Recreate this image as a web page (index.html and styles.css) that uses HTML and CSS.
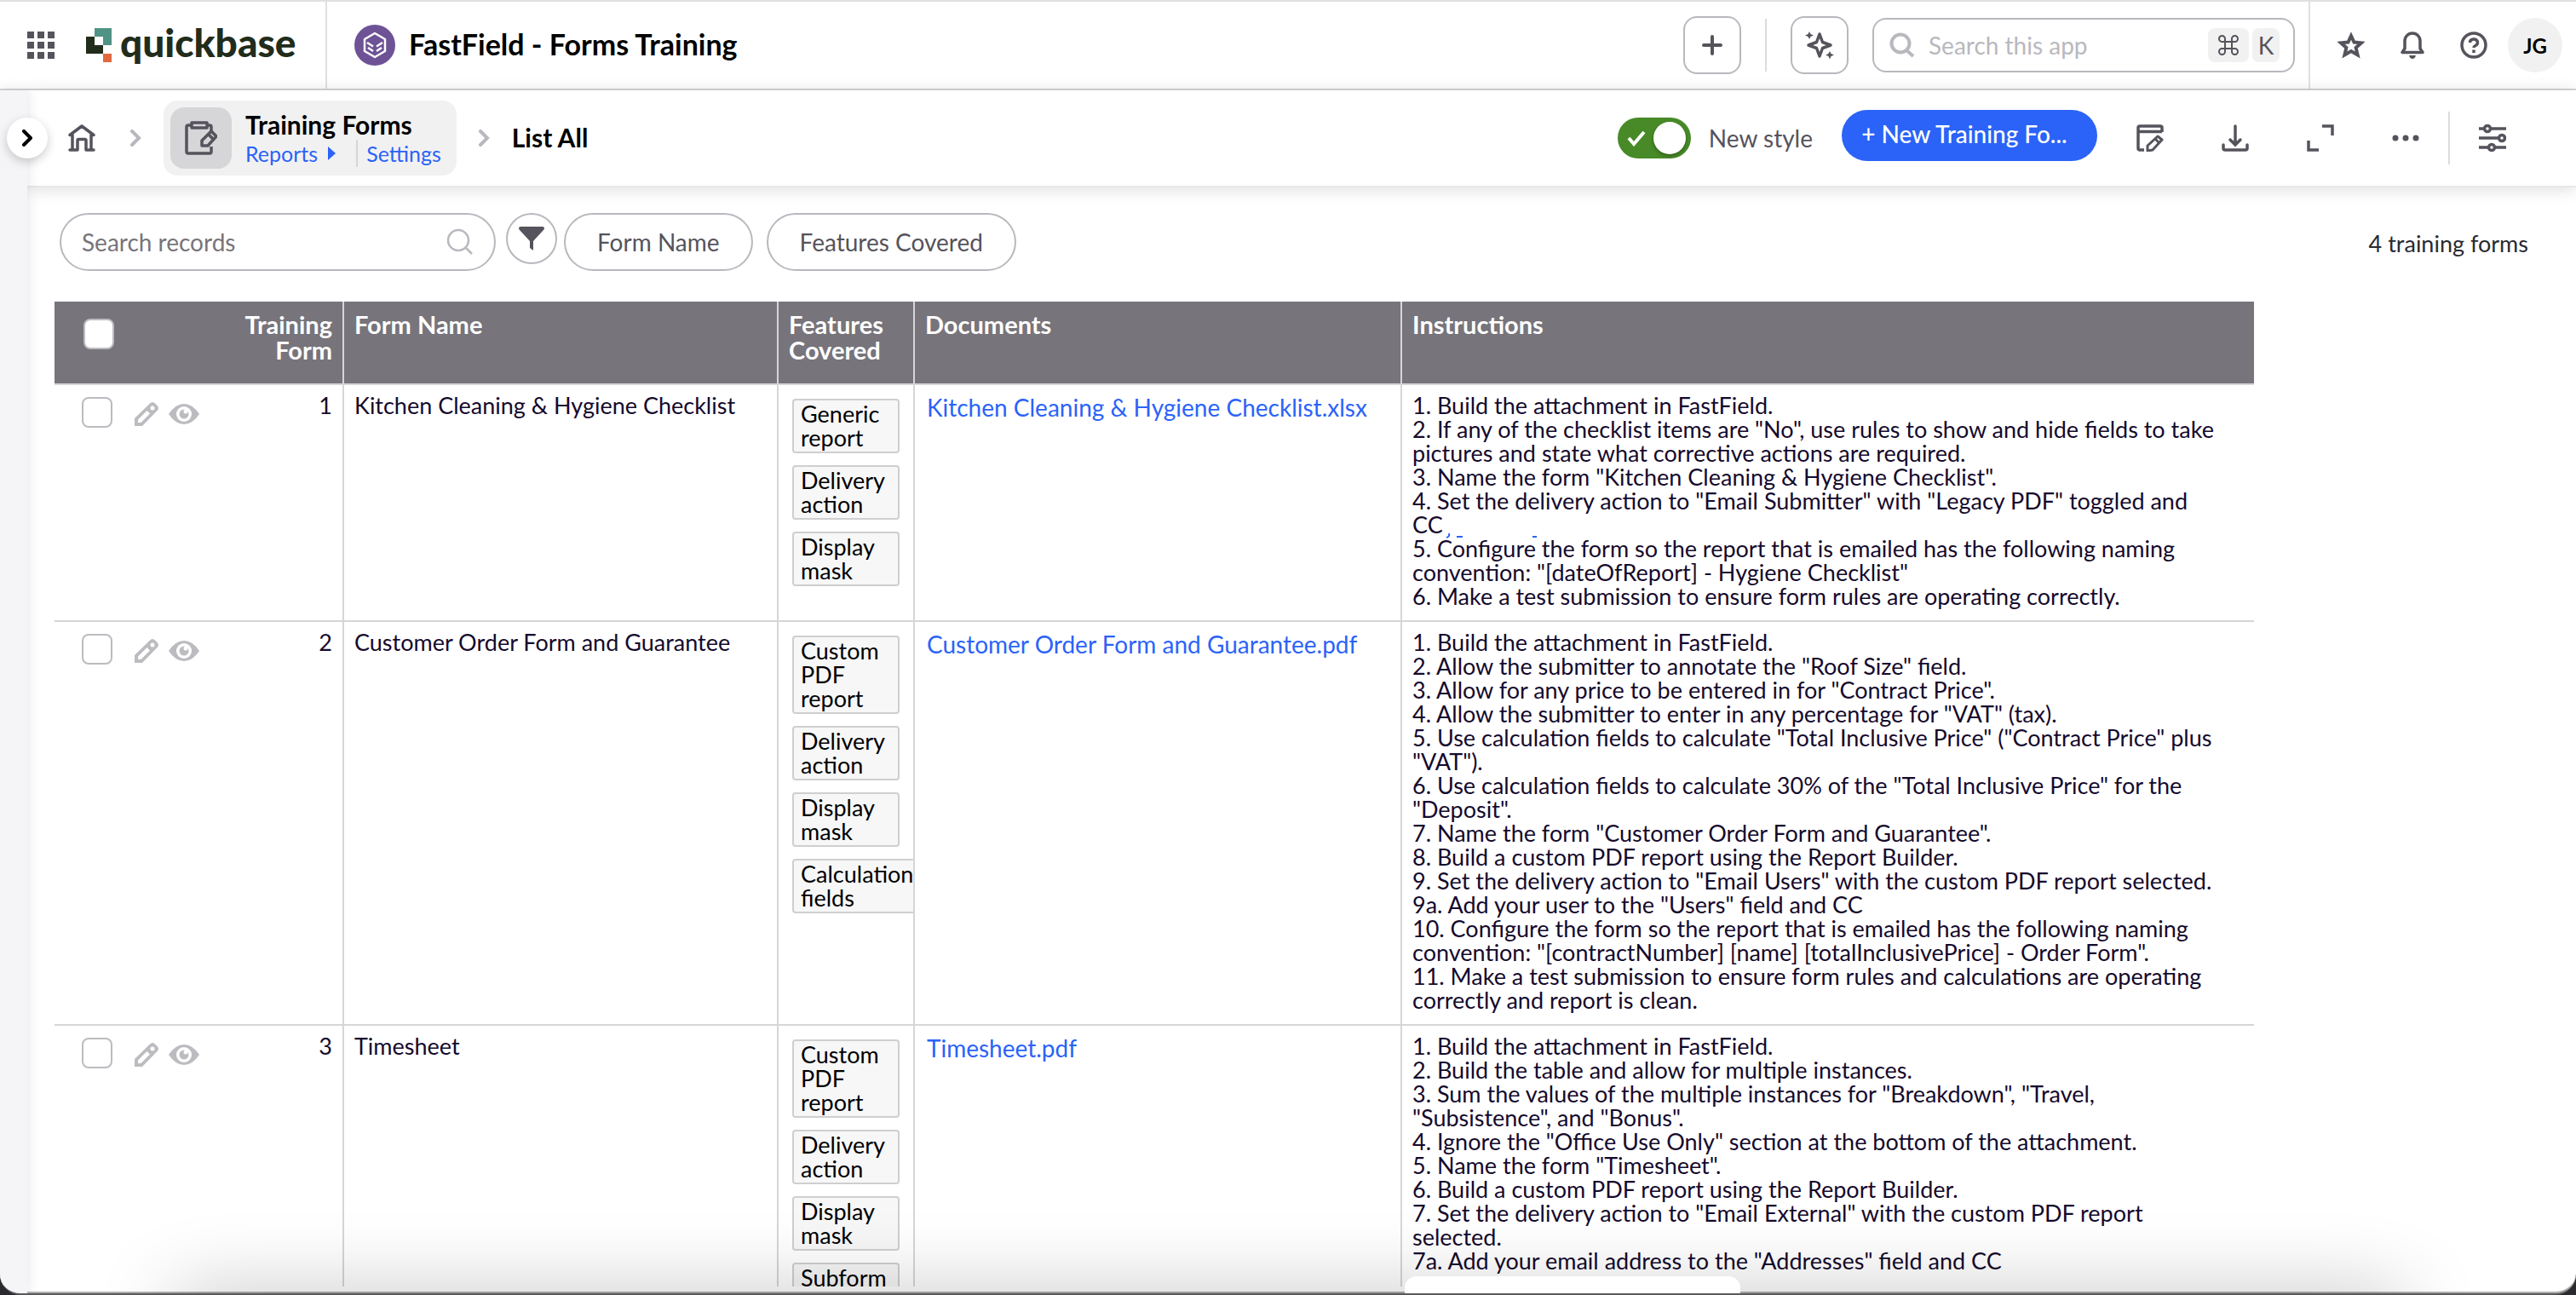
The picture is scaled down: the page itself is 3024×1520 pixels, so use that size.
FILE: index.html
```html
<!DOCTYPE html>
<html lang="en">
<head>
    <meta charset="UTF-8">
    <meta name="viewport" content="width=device-width, initial-scale=1.0">
    <title>FastField - Forms Training</title>
    <link rel="stylesheet" href="styles.css">
</head>
<body>
    <svg class="sprite" aria-hidden="true">
        <symbol id="pencil" viewBox="0 0 28 28">
            <path d="M0 28v-9L18 1.500q3-3 6 0l2.500 2.500q3 3 0 6L9 28z" fill="currentColor"/>
            <path d="M4 20.500L14.500 10l3.500 3.500L7.500 24H4z" fill="#fff"/>
            <circle cx="21" cy="7" r="2.500" fill="#fff"/>
        </symbol>
        <symbol id="eye" viewBox="0 0 36 24">
            <path d="M0 12Q8 0 18 0t18 12Q28 24 18 24T0 12z" fill="currentColor"/>
            <circle cx="18" cy="12" r="9" fill="#fff"/>
            <circle cx="18" cy="12" r="5.500" fill="currentColor"/>
            <circle cx="20" cy="9" r="2.500" fill="#fff"/>
        </symbol>
    </svg>

    <div class="window">
        <!-- Global header -->
        <header class="topbar">
            <div class="brand">
                <button class="icon-btn" aria-label="Apps">
                    <svg width="32" height="32" viewBox="0 0 32 32" fill="#56535c">
                        <path d="M0 0h8v8H0zM12 0h8v8h-8zM24 0h8v8h-8zM0 12h8v8H0zM12 12h8v8h-8zM24 12h8v8h-8zM0 24h8v8H0zM12 24h8v8h-8zM24 24h8v8h-8z"/>
                    </svg>
                </button>
                <a class="logo" href="#">
                    <svg width="30" height="40" viewBox="0 0 30 40">
                        <path d="M10 0h20v20h-10v-10h-10z" fill="#4f9384"/>
                        <path d="M0 10h10v10h10v10H0z" fill="#212c1b"/>
                        <path d="M20 30h10v10H20z" fill="#e1683f"/>
                    </svg>
                    <span>quickbase</span>
                </a>
            </div>
            <div class="app">
                <svg width="48" height="48" viewBox="0 0 48 48">
                    <circle cx="24" cy="24" r="24" fill="#6e5296"/>
                    <path d="M24 10l12 7v14l-12 7-12-7V17z" fill="none" stroke="#fff" stroke-width="2.500" stroke-linejoin="round"/>
                    <path d="M15 21l7 4.500M33 21l-7 4.500M16 27l6 4M32 27l-6 4" stroke="#fff" stroke-width="2.500" fill="none"/>
                </svg>
                <h1>FastField - Forms Training</h1>
            </div>
            <div class="top-tools">
                <button class="box-btn" aria-label="Add">
                    <svg width="24" height="24" viewBox="0 0 24 24"><path d="M12 2v20M2 12h20" stroke="#56535c" stroke-width="4" stroke-linecap="round"/></svg>
                </button>
                <span class="divider"></span>
                <button class="box-btn" aria-label="Assistant">
                    <svg width="34" height="34" viewBox="0 0 34 34" fill="#56535c">
                        <path d="M17 4l3.500 9.500L30 17l-9.500 3.500L17 30l-3.500-9.500L4 17l9.500-3.500z" fill="none" stroke="#56535c" stroke-width="3.500" stroke-linejoin="round"/>
                        <path d="M5 1l1.500 3L10 5.500 6.500 7 5 10 3.500 7 0 5.500 3.500 4zM29 24l1.500 3 3.500 1.500L30.500 30 29 33.500 27.500 30 24 28.500 27.500 27z"/>
                    </svg>
                </button>
                <div class="app-search">
                    <svg width="30" height="30" viewBox="0 0 30 30" fill="none" stroke="#b9b8be" stroke-width="4"><circle cx="13" cy="13" r="10.500"/><path d="M20 21l8 7"/></svg>
                    <input type="text" placeholder="Search this app" aria-label="Search this app">
                    <kbd class="cmd">
                        <svg width="24" height="24" viewBox="0 0 24 24" fill="none" stroke="#56535c" stroke-width="2"><path d="M8 8h8v8H8zM8 8H5a3.500 3.500 0 1 1 3-3.500zM16 8V4.500A3.500 3.500 0 1 1 19.500 8zM16 16h3.500a3.500 3.500 0 1 1-3.500 3.500zM8 16v3.500A3.500 3.500 0 1 1 4.500 16z"/></svg>
                    </kbd>
                    <kbd>K</kbd>
                </div>
            </div>
            <div class="user-tools">
                <button class="icon-btn" aria-label="Favorites">
                    <svg width="32" height="32" viewBox="0 0 32 32"><path d="M16 5l3.500 7.500 8.500.8-6.400 5.700 2 8.500L16 23l-7.600 4.500 2-8.500L4 13.300l8.500-.8z" fill="none" stroke="#56535c" stroke-width="4"/></svg>
                </button>
                <button class="icon-btn" aria-label="Notifications">
                    <svg width="32" height="32" viewBox="0 0 32 32" fill="none" stroke="#56535c" stroke-width="3.500"><path d="M4 24.500h24L25 20v-9a9 9 0 0 0-18 0v9z" stroke-linejoin="round"/><path d="M12 28h8q-1 4-4 4t-4-4z" fill="#56535c" stroke="none"/></svg>
                </button>
                <button class="icon-btn" aria-label="Help">
                    <svg width="32" height="32" viewBox="0 0 32 32" fill="none" stroke="#56535c" stroke-width="3.500"><circle cx="16" cy="16" r="14"/><path d="M11.500 13a4.500 4 0 1 1 6.500 3.500q-2 1-2 2.500M16 21.500v3.500"/></svg>
                </button>
                <button class="avatar">JG</button>
            </div>
        </header>

        <div class="body">
            <aside class="rail">
                <button class="expand" aria-label="Expand navigation">
                    <svg width="14" height="20" viewBox="0 0 14 20"><path d="M3 2l8 8-8 8" fill="none" stroke="#000" stroke-width="4" stroke-linecap="round" stroke-linejoin="round"/></svg>
                </button>
            </aside>

            <main class="main">
                <!-- Breadcrumb and page actions -->
                <div class="pagebar">
                    <nav class="crumbs">
                        <a class="home" href="#" aria-label="Home">
                            <svg width="32" height="32" viewBox="0 0 32 32" fill="none" stroke="#56535c" stroke-width="3.500"><path d="M2 12.500L16 2l14 10.500M5 12v18h6V19q0-1.500 1.500-1.500h7q1.500 0 1.500 1.500v11h6V12M2 30h9M21 30h9" stroke-linejoin="round" stroke-linecap="round"/></svg>
                        </a>
                        <svg class="sep" width="14" height="20" viewBox="0 0 14 20"><path d="M3 2l8 8-8 8" fill="none" stroke="#b9b8be" stroke-width="4" stroke-linecap="round"/></svg>
                        <div class="table-crumb">
                            <span class="table-icon">
                                <svg width="38" height="40" viewBox="0 0 38 40" fill="none" stroke="#56535c" stroke-width="3.500" stroke-linejoin="round">
                                    <path d="M8 5H4q-2 0-2 2v29q0 2 2 2h25q2 0 2-2v-6M31 12V7q0-2-2-2h-3"/>
                                    <path d="M8 2h18v6H8zM20 23l11-11 6 6-10 11h-7z"/><path d="M28 16l5 5"/>
                                </svg>
                            </span>
                            <div class="table-names">
                                <strong>Training Forms</strong>
                                <div class="table-links">
                                    <a href="#">Reports <svg width="9" height="16" viewBox="0 0 9 16"><path d="M0 0l9 8-9 8z" fill="#2b63f8"/></svg></a>
                                    <a class="settings" href="#">Settings</a>
                                </div>
                            </div>
                        </div>
                        <svg class="sep" width="14" height="20" viewBox="0 0 14 20"><path d="M3 2l8 8-8 8" fill="none" stroke="#b9b8be" stroke-width="4" stroke-linecap="round"/></svg>
                        <strong class="current">List All</strong>
                    </nav>
                    <div class="actions">
                        <label class="switch">
                            <input type="checkbox" checked>
                            <span class="track">
                                <svg width="24" height="20" viewBox="0 0 24 20"><path d="M3 10l6 7L21 3" fill="none" stroke="#fff" stroke-width="4"/></svg>
                                <span class="knob"></span>
                            </span>
                            New style
                        </label>
                        <button class="primary">+ New Training Fo...</button>
                        <div class="action-icons">
                            <button class="icon-btn" aria-label="Customize">
                                <svg width="32" height="32" viewBox="0 0 32 32" fill="none" stroke="#56535c" stroke-width="3.500" stroke-linejoin="round"><path d="M9 30H4q-2 0-2-2V4q0-2 2-2h24q2 0 2 2v5M2 8.500h28"/><path d="M13 31v-6l12-11 5 4-11 12z" stroke-width="3"/><path d="M22 17l4 4" stroke-width="3"/></svg>
                            </button>
                            <button class="icon-btn" aria-label="Download">
                                <svg width="32" height="32" viewBox="0 0 32 32" fill="none" stroke="#56535c" stroke-width="3.500" stroke-linecap="round"><path d="M16 2v21M10 18l6 6 6-6M2 24v4q0 2 2 2h24q2 0 2-2v-4"/></svg>
                            </button>
                            <button class="icon-btn" aria-label="Full screen">
                                <svg width="32" height="32" viewBox="0 0 32 32" fill="none" stroke="#56535c" stroke-width="3.500"><path d="M18 2h12v11M2 19v11h12"/></svg>
                            </button>
                            <button class="icon-btn" aria-label="More">
                                <svg width="32" height="32" viewBox="0 0 32 32" fill="#56535c"><circle cx="4" cy="16" r="3.500"/><circle cx="16" cy="16" r="3.500"/><circle cx="28" cy="16" r="3.500"/></svg>
                            </button>
                        </div>
                        <span class="divider"></span>
                        <button class="icon-btn" aria-label="Display options">
                            <svg width="32" height="32" viewBox="0 0 32 32" fill="none" stroke="#56535c" stroke-width="3.500"><path d="M0 5h6M14 5h18M0 16h23M31 16h1M0 27h11M19 27h13"/><circle cx="10" cy="5" r="3.500"/><circle cx="27" cy="16" r="3.500"/><circle cx="15" cy="27" r="3.500"/></svg>
                        </button>
                    </div>
                </div>

                <!-- Filters -->
                <div class="filters">
                    <div class="record-search">
                        <input type="text" placeholder="Search records" aria-label="Search records">
                        <svg width="32" height="32" viewBox="0 0 32 32" fill="none" stroke="#b9b8be" stroke-width="2.500"><circle cx="14" cy="14" r="12"/><path d="M23 23l7 7"/></svg>
                    </div>
                    <button class="funnel" aria-label="Filter">
                        <svg width="30" height="28" viewBox="0 0 30 28"><path d="M0 2q0-2 2-2h26q2 0 2 2 0 1-1 2L17 17v11l-4-3v-8L1 4Q0 3 0 2z" fill="#56535c"/></svg>
                    </button>
                    <button class="pill">Form Name</button>
                    <button class="pill">Features Covered</button>
                    <span class="count">4 training forms</span>
                </div>

                <!-- Records -->
                <div class="records">
                    <table>
                        <colgroup>
                            <col class="col-tools"><col class="col-id"><col class="col-name"><col class="col-features"><col class="col-docs"><col>
                        </colgroup>
                        <thead>
                            <tr>
                                <th class="tools"><input type="checkbox" aria-label="Select all"></th>
                                <th class="id">Training Form</th>
                                <th>Form Name</th>
                                <th>Features Covered</th>
                                <th>Documents</th>
                                <th>Instructions</th>
                            </tr>
                        </thead>
                        <tbody>
                            <tr>
                                <td class="tools">
                                    <div class="row-tools">
                                        <input type="checkbox" aria-label="Select record 1">
                                        <button class="icon-btn" aria-label="Edit"><svg width="28" height="28"><use href="#pencil"/></svg></button>
                                        <button class="icon-btn" aria-label="View"><svg width="36" height="24"><use href="#eye"/></svg></button>
                                    </div>
                                </td>
                                <td class="id">1</td>
                                <td>Kitchen Cleaning &amp; Hygiene Checklist</td>
                                <td class="features">
                                    <span class="tag">Generic report</span>
                                    <span class="tag">Delivery action</span>
                                    <span class="tag">Display mask</span>
                                </td>
                                <td class="docs"><a href="#">Kitchen Cleaning &amp; Hygiene Checklist.xlsx</a></td>
                                <td class="steps">1. Build the attachment in FastField.<br>
                                    2. If any of the checklist items are "No", use rules to show and hide fields to take<br>
                                    pictures and state what corrective actions are required.<br>
                                    3. Name the form "Kitchen Cleaning &amp; Hygiene Checklist".<br>
                                    4. Set the delivery action to "Email Submitter" with "Legacy PDF" toggled and<br>
                                    CC <svg class="mark" width="108" height="6" viewBox="0 0 108 6"><path d="M3 0q1 4-3 5M12 4h7M101 4h5" fill="none" stroke="#2b63f8" stroke-width="2"/></svg><br>
                                    5. Configure the form so the report that is emailed has the following naming<br>
                                    convention: "[dateOfReport] - Hygiene Checklist"<br>
                                    6. Make a test submission to ensure form rules are operating correctly.</td>
                            </tr>
                            <tr>
                                <td class="tools">
                                    <div class="row-tools">
                                        <input type="checkbox" aria-label="Select record 2">
                                        <button class="icon-btn" aria-label="Edit"><svg width="28" height="28"><use href="#pencil"/></svg></button>
                                        <button class="icon-btn" aria-label="View"><svg width="36" height="24"><use href="#eye"/></svg></button>
                                    </div>
                                </td>
                                <td class="id">2</td>
                                <td>Customer Order Form and Guarantee</td>
                                <td class="features">
                                    <span class="tag">Custom PDF report</span>
                                    <span class="tag">Delivery action</span>
                                    <span class="tag">Display mask</span>
                                    <span class="tag">Calculation fields</span>
                                </td>
                                <td class="docs"><a href="#">Customer Order Form and Guarantee.pdf</a></td>
                                <td class="steps">1. Build the attachment in FastField.<br>
                                    2. Allow the submitter to annotate the "Roof Size" field.<br>
                                    3. Allow for any price to be entered in for "Contract Price".<br>
                                    4. Allow the submitter to enter in any percentage for "VAT" (tax).<br>
                                    5. Use calculation fields to calculate "Total Inclusive Price" ("Contract Price" plus<br>
                                    "VAT").<br>
                                    6. Use calculation fields to calculate 30% of the "Total Inclusive Price" for the<br>
                                    "Deposit".<br>
                                    7. Name the form "Customer Order Form and Guarantee".<br>
                                    8. Build a custom PDF report using the Report Builder.<br>
                                    9. Set the delivery action to "Email Users" with the custom PDF report selected.<br>
                                    9a. Add your user to the "Users" field and CC<br>
                                    10. Configure the form so the report that is emailed has the following naming<br>
                                    convention: "[contractNumber] [name] [totalInclusivePrice] - Order Form".<br>
                                    11. Make a test submission to ensure form rules and calculations are operating<br>
                                    correctly and report is clean.</td>
                            </tr>
                            <tr>
                                <td class="tools">
                                    <div class="row-tools">
                                        <input type="checkbox" aria-label="Select record 3">
                                        <button class="icon-btn" aria-label="Edit"><svg width="28" height="28"><use href="#pencil"/></svg></button>
                                        <button class="icon-btn" aria-label="View"><svg width="36" height="24"><use href="#eye"/></svg></button>
                                    </div>
                                </td>
                                <td class="id">3</td>
                                <td>Timesheet</td>
                                <td class="features">
                                    <span class="tag">Custom PDF report</span>
                                    <span class="tag">Delivery action</span>
                                    <span class="tag">Display mask</span>
                                    <span class="tag">Subform</span>
                                </td>
                                <td class="docs"><a href="#">Timesheet.pdf</a></td>
                                <td class="steps">1. Build the attachment in FastField.<br>
                                    2. Build the table and allow for multiple instances.<br>
                                    3. Sum the values of the multiple instances for "Breakdown", "Travel,<br>
                                    "Subsistence", and "Bonus".<br>
                                    4. Ignore the "Office Use Only" section at the bottom of the attachment.<br>
                                    5. Name the form "Timesheet".<br>
                                    6. Build a custom PDF report using the Report Builder.<br>
                                    7. Set the delivery action to "Email External" with the custom PDF report<br>
                                    selected.<br>
                                    7a. Add your email address to the "Addresses" field and CC</td>
                            </tr>
                        </tbody>
                    </table>
                </div>
            </main>
        </div>
        <div class="dock-shadow"></div>
        <div class="dock-label"></div>
    </div>
</body>
</html>
```
FILE: styles.css
```css
* {
    box-sizing: border-box;
}
body {
    margin: 0;
    height: 100vh;
    overflow: hidden;
    background: #2b2a2f;
    color: #000;
    font-family: Lato, "Open Sans", sans-serif;
    font-size: 28px;
}
button {
    font: inherit;
    color: inherit;
    padding: 0;
    border: 0;
    background: none;
}
input[type="text"] {
    font: inherit;
    flex: 1;
    min-width: 0;
    padding: 0;
    border: 0;
    outline: 0;
    background: none;
}
a {
    color: #2b63f8;
    text-decoration: none;
}
svg {
    display: block;
    flex: none;
}
.sprite {
    position: absolute;
    width: 0;
    height: 0;
}
.window {
    position: relative;
    display: flex;
    flex-direction: column;
    height: 100%;
    overflow: hidden;
    background: #fff;
    border-top: 2px solid #e0e0e0;
    border-bottom: 2px solid #5a5a5c;
    border-radius: 0 0 24px 24px;
    box-shadow: inset 0 -2px #b0b0b0;
}

/* header */
.topbar {
    display: flex;
    flex: none;
    height: 104px;
    border-bottom: 2px solid #d6d6d6;
}
.brand {
    display: flex;
    align-items: center;
    gap: 37px;
    width: 384px;
    padding-left: 32px;
    border-right: 2px solid #e0e0e0;
}
.logo {
    display: flex;
    align-items: center;
    gap: 10px;
    color: #212c1b;
    font-size: 46px;
    font-weight: 900;
    line-height: 48px;
}
.logo span {
    padding-bottom: 6px;
}
.app {
    display: flex;
    align-items: center;
    gap: 16px;
    padding-left: 32px;
}
.app h1 {
    margin: 0;
    padding-bottom: 4px;
    font-size: 34px;
    font-weight: 700;
}
.top-tools {
    display: flex;
    align-items: center;
    gap: 28px;
    margin-left: auto;
    padding-right: 16px;
    border-right: 2px solid #e0e0e0;
}
.box-btn {
    display: flex;
    align-items: center;
    justify-content: center;
    width: 68px;
    height: 68px;
    border: 2px solid #b9b8be;
    border-radius: 16px;
}
.divider {
    width: 2px;
    height: 62px;
    background: #dcdcde;
}
.app-search {
    display: flex;
    align-items: center;
    gap: 4px;
    width: 496px;
    height: 64px;
    padding: 0 16px 0 18px;
    border: 2px solid #b9b8be;
    border-radius: 16px;
}
.app-search input {
    padding-left: 12px;
}
.app-search input::placeholder {
    color: #b9b8be;
    opacity: 1;
}
kbd {
    display: flex;
    align-items: center;
    justify-content: center;
    width: 32px;
    height: 40px;
    border-radius: 8px;
    background: #f1f1f1;
    color: #56535c;
    font-family: inherit;
    font-size: 28px;
}
kbd.cmd {
    width: 48px;
}
.user-tools {
    display: flex;
    align-items: center;
    gap: 40px;
    padding: 0 16px 0 32px;
}
.avatar {
    width: 64px;
    height: 64px;
    margin-left: -16px;
    border-radius: 50%;
    background: #f1f1f1;
    font-size: 24px;
    font-weight: 700;
}

/* body */
.body {
    display: flex;
    flex: 1;
    min-height: 0;
}
.rail {
    position: relative;
    z-index: 2;
    flex: none;
    width: 32px;
    background: #f5f5f8;
    box-shadow: 0 0 16px rgba(0, 0, 0, 0.12);
}
.expand {
    position: absolute;
    top: 32px;
    left: 8px;
    display: flex;
    align-items: center;
    justify-content: center;
    width: 48px;
    height: 48px;
    border-radius: 50%;
    background: #fff;
    box-shadow: 0 4px 12px rgba(0, 0, 0, 0.2);
}
.main {
    display: flex;
    flex: 1;
    flex-direction: column;
    min-width: 0;
}
.pagebar {
    position: relative;
    display: flex;
    flex: none;
    align-items: center;
    justify-content: space-between;
    height: 114px;
    padding: 0 82px 0 48px;
    background: #fff;
    border-bottom: 2px solid #e8e8e8;
    box-shadow: 0 2px 18px rgba(0, 0, 0, 0.14);
}
.crumbs {
    display: flex;
    align-items: center;
}
.sep {
    margin: 0 26px 0 40px;
}
.table-crumb {
    display: flex;
    align-items: center;
    gap: 16px;
    height: 88px;
    padding: 0 18px 0 8px;
    border-radius: 16px;
    background: #f1f1f1;
}
.crumbs .table-crumb + .sep {
    margin-left: 25px;
}
.crumbs strong {
    font-size: 30px;
}
.table-icon {
    display: flex;
    align-items: center;
    justify-content: center;
    width: 72px;
    height: 72px;
    border-radius: 16px;
    background: #d6d6d8;
}
.table-names {
    line-height: 36px;
}
.table-names strong {
    display: block;
}
.table-links {
    display: flex;
    font-size: 25px;
}
.table-links a {
    display: flex;
    align-items: center;
    gap: 12px;
    line-height: 32px;
}
.table-links .settings {
    margin-left: 24px;
    padding-left: 10px;
    border-left: 2px solid #d6d6d8;
}
.current {
    padding-bottom: 2px;
}
.actions {
    display: flex;
    align-items: center;
}
.switch {
    display: flex;
    align-items: center;
    gap: 21px;
    color: #56535c;
}
.switch input {
    position: absolute;
    opacity: 0;
}
.track {
    display: flex;
    align-items: center;
    justify-content: space-between;
    width: 86px;
    height: 48px;
    padding: 0 6px 0 10px;
    border-radius: 24px;
    background: #478a27;
}
.knob {
    width: 38px;
    height: 38px;
    border-radius: 50%;
    background: #fff;
    box-shadow: 0 2px 4px rgba(0, 0, 0, 0.3);
}
.primary {
    width: 300px;
    height: 60px;
    margin: 0 46px 6px 34px;
    padding: 0 12px 4px 0;
    border-radius: 30px;
    background: #2b63f8;
    color: #fff;
    font-weight: 500;
}
.action-icons {
    display: flex;
    gap: 68px;
    margin-right: 34px;
}
.actions .divider {
    margin-right: 34px;
}

.filters {
    display: flex;
    flex: none;
    align-items: flex-start;
    padding: 30px 56px 36px 38px;
    color: #56535c;
}
.record-search {
    display: flex;
    align-items: center;
    width: 512px;
    height: 68px;
    padding: 0 24px;
    border: 2px solid #b9b8be;
    border-radius: 34px;
}
.record-search input::placeholder {
    color: #77747b;
    opacity: 1;
}
.funnel {
    display: flex;
    align-items: center;
    justify-content: center;
    width: 60px;
    height: 60px;
    margin: 0 8px 0 12px;
    border: 2px solid #b9b8be;
    border-radius: 50%;
}
.pill {
    height: 68px;
    margin-right: 16px;
    padding: 0 37px;
    border: 2px solid #b9b8be;
    border-radius: 34px;
}
.count {
    margin-left: auto;
    padding-top: 20px;
    color: #2b2a2f;
    font-size: 27px;
    line-height: 32px;
}

/* table */
.records {
    flex: 1;
    min-height: 0;
    margin-bottom: 8px;
    padding: 0 378px 0 32px;
    overflow: hidden;
}
table {
    width: 100%;
    table-layout: fixed;
    border-collapse: separate;
    border-spacing: 0;
}
.col-tools {
    width: 176px;
}
.col-id {
    width: 164px;
}
.col-name {
    width: 510px;
}
.col-features {
    width: 160px;
}
.col-docs {
    width: 572px;
}
th,
td {
    padding: 10px 12px 14px;
    border-right: 2px solid #d6d6d8;
    border-bottom: 2px solid #d6d6d8;
    text-align: left;
    vertical-align: top;
}
th:last-child,
td:last-child,
.tools {
    border-right: 0;
}
th {
    height: 98px;
    padding-top: 12px;
    background: #77747b;
    color: #fff;
    font-size: 29px;
    font-weight: 700;
    line-height: 30px;
}
td {
    color: #150a2c;
    font-size: 27px;
    line-height: 28px;
}
th.id,
td.id {
    text-align: right;
}
th.tools {
    padding: 20px 34px;
}
td.tools {
    padding: 14px 0 0 32px;
}
.row-tools {
    display: flex;
    align-items: center;
    color: #bcbbc0;
}
.row-tools .icon-btn {
    margin: 4px 0 0 26px;
}
.row-tools .icon-btn + .icon-btn {
    margin-left: 12px;
}
td input,
th input {
    appearance: none;
    display: block;
    width: 36px;
    height: 36px;
    margin: 0;
    border: 2px solid #bcbbc0;
    border-radius: 8px;
    background: #fff;
}
td.features {
    padding: 16px 0 0 16px;
    overflow: hidden;
}
.tag {
    display: block;
    width: min-content;
    min-width: 126px;
    margin-bottom: 14px;
    padding: 2px 8px;
    border: 2px solid #cfcfd1;
    border-radius: 4px;
    background: #f7f7f7;
    color: #000;
}
td.docs {
    padding: 12px 14px;
    font-size: 28px;
}
.steps {
    white-space: nowrap;
}
.mark {
    position: absolute;
    display: inline-block;
    margin: 24px 0 0 4px;
}

/* shadow cast by the desktop dock */
.dock-shadow {
    position: absolute;
    top: 100%;
    left: 200px;
    right: 200px;
    height: 60px;
    border-radius: 30px;
    box-shadow: 0 0 90px rgba(0, 0, 0, 0.25);
    z-index: 3;
}
.dock-label {
    position: absolute;
    left: 1649px;
    bottom: -4px;
    width: 394px;
    height: 24px;
    border-radius: 14px 14px 0 0;
    background: #fff;
    z-index: 4;
}
```
